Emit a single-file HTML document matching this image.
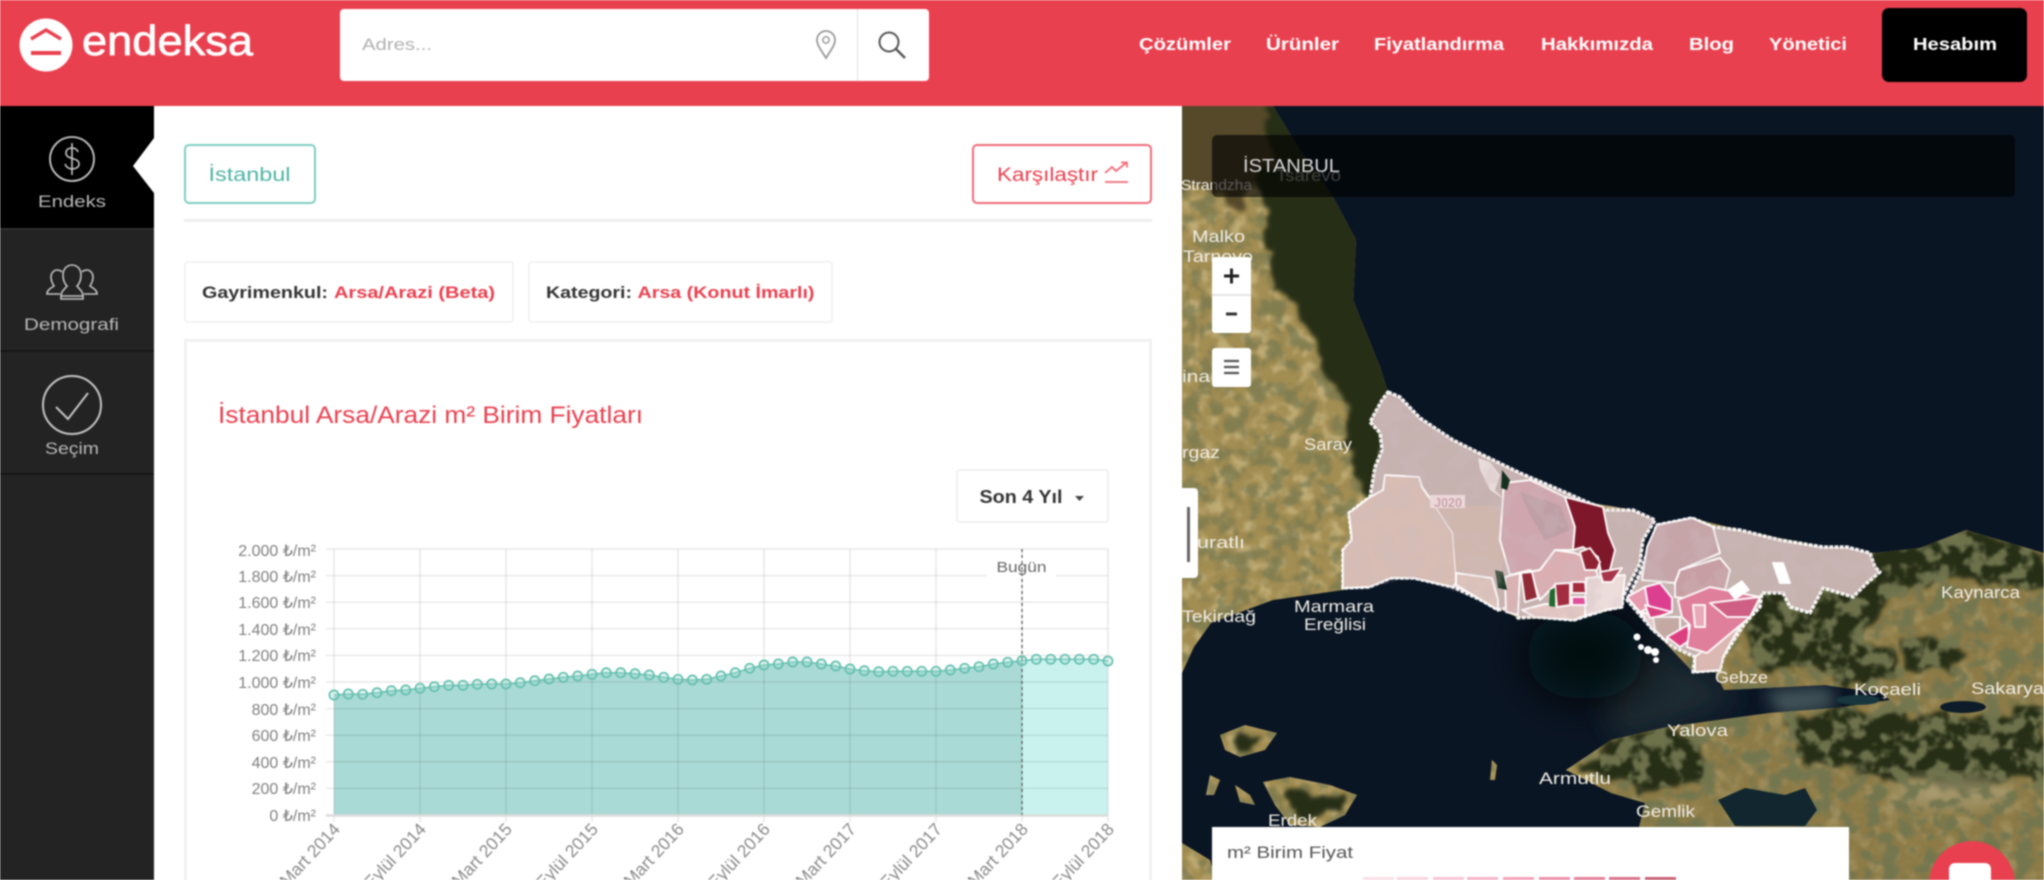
<!DOCTYPE html>
<html lang="tr"><head><meta charset="utf-8"><title>endeksa</title>
<style>
html,body{margin:0;padding:0;background:#fff;overflow:hidden}
body{width:2044px;height:880px;position:relative;font-family:"Liberation Sans",sans-serif}
#w{position:absolute;left:0;top:0;width:2044px;height:880px;overflow:hidden;filter:blur(.9px)}
.a{position:absolute;box-sizing:border-box}
svg{position:absolute;left:0;top:0}
text{font-family:"Liberation Sans","DejaVu Sans",sans-serif}
</style></head><body><div id="w">
<svg width="2044" height="880" viewBox="0 0 2044 880">
<defs>
<filter id="nl" x="0" y="0" width="100%" height="100%"><feTurbulence type="fractalNoise" baseFrequency=".07" numOctaves="4" seed="11"/><feColorMatrix type="matrix" values="0 0 0 0 .72 0 0 0 0 .6 0 0 0 0 .32 0 4 0 0 -1.9"/><feGaussianBlur stdDeviation="1"/></filter>
<filter id="nd" x="0" y="0" width="100%" height="100%"><feTurbulence type="fractalNoise" baseFrequency=".06" numOctaves="4" seed="5"/><feColorMatrix type="matrix" values="0 0 0 0 .17 0 0 0 0 .18 0 0 0 0 .08 7 0 0 0 -3.3"/><feGaussianBlur stdDeviation="1"/></filter>
<filter id="nt" x="0" y="0" width="100%" height="100%"><feTurbulence type="fractalNoise" baseFrequency=".045" numOctaves="3" seed="21"/><feColorMatrix type="matrix" values="0 0 0 0 .62 0 0 0 0 .5 0 0 0 0 .52 5 0 0 0 -2.2"/></filter>
<filter id="fo" x="-20%" y="-20%" width="140%" height="140%"><feTurbulence type="fractalNoise" baseFrequency=".04" numOctaves="3" seed="9" result="t"/><feDisplacementMap in="SourceGraphic" in2="t" scale="30" xChannelSelector="R" yChannelSelector="G"/><feGaussianBlur stdDeviation="2"/></filter>
<filter id="b8"><feGaussianBlur stdDeviation="8"/></filter>
<filter id="b14"><feGaussianBlur stdDeviation="14"/></filter>
<filter id="b24" x="-50%" y="-50%" width="200%" height="200%"><feGaussianBlur stdDeviation="24"/></filter>
<clipPath id="mc"><rect x="1182" y="106" width="862" height="774"/></clipPath>
<clipPath id="ic"><path d="M1388 392 1420 418 1453 440 1520 473 1587 502 1633 510 1655 520 1643 540 1640 563 1622 607 1574 620 1518 618 1481 600 1414 578 1369 587 1343 588 1343 550 1349 513 1370 497 1380 433 1370 422ZM1657 525 1692 518 1740 530 1823 547 1870 553 1880 572 1853 597 1823 588 1810 613 1783 593 1762 593 1745 623 1720 670 1693 672 1653 630 1627 600Z"/></clipPath>
<clipPath id="lc"><path d="M1182 106H1273L1300 150 1333 197 1356 240 1353 300 1380 367 1388 392 1420 418 1453 440 1520 473 1587 502 1633 510 1655 520 1643 540 1640 563 1623 597 1622 607 1574 620 1518 618 1481 600 1453 587 1414 578 1391 578 1343 590 1273 600 1211 623 1194 647 1182 673ZM1657 525 1692 518 1740 530 1823 547 1875 553 1920 548 1966 530 2000 540 2044 553V880H1620L1639 827 1645 803 1611 793 1566 770 1611 740 1667 727 1769 713 1836 708 1890 700 1881 693 1825 685 1724 690 1715 672 1693 672 1653 630 1627 600 1640 573ZM1182 843 1210 860 1215 880H1182ZM1263 782 1290 777 1330 785 1357 795 1345 815 1320 827 1290 825 1275 805ZM1220 735 1245 725 1277 733 1265 750 1240 757 1225 750ZM1210 775 1220 780 1214 795 1206 795ZM1235 785 1250 795 1255 805 1240 802ZM1492 760 1497 765 1495 780 1490 780Z"/></clipPath>
<marker id="dot" markerUnits="userSpaceOnUse" markerWidth="12" markerHeight="12" refX="6" refY="6"><circle cx="6" cy="6" r="4.600" fill="#a6e0d6" fill-opacity=".35" stroke="#63bfae" stroke-width="1.700"/></marker>
</defs>
<!-- MAP -->
<g clip-path="url(#mc)">
<rect x="1182" y="106" width="862" height="774" fill="#0a1524"/>
<path d="M1650 640 1720 680 1740 700 1680 725 1620 745 1600 700Z" fill="#1e2933" filter="url(#b14)"/>
<ellipse cx="1585" cy="655" rx="60" ry="45" fill="#050910" filter="url(#b24)"/>
<path d="M1765 690 1830 687 1835 708 1780 716Z" fill="#44565c" filter="url(#b8)"/>
<g clip-path="url(#lc)">
<rect x="1182" y="106" width="862" height="774" fill="#a28d52"/>
<rect x="1182" y="106" width="862" height="774" fill="#000" filter="url(#nl)" opacity=".5"/>
<rect x="1182" y="106" width="420" height="774" fill="#000" filter="url(#nd)" opacity=".65"/>
<rect x="1600" y="510" width="444" height="370" fill="#6f6136" fill-opacity=".4"/>
<g fill="#262e18" filter="url(#fo)">
<path d="M1240 106H1290L1345 200 1370 250 1365 300 1395 370 1400 420 1385 470 1365 510 1352 470 1345 400 1320 370 1300 310 1268 280 1272 230 1250 170Z"/>
<path d="M1170 90H1262L1272 160 1240 205 1195 190 1170 205Z" fill="#54492b"/>
<path d="M1748 590 1830 590 1900 570 1875 620 1830 670 1765 670 1745 640Z"/>
<path d="M1831 650 1891 645 1895 680 1840 682Z"/>
<path d="M1860 555 1966 530 2044 553 2044 590 1960 580 1880 590Z"/>
<path d="M1567 763 1640 733 1700 735 1704 787 1640 790Z"/>
<path d="M1787 715 1860 710 1960 720 2044 705 2044 775 1950 790 1850 770 1800 760Z"/>
<path d="M1900 640 1960 645 1950 672 1905 670Z"/>
<path d="M1280 800 1340 790 1340 815 1300 820Z"/>
<path d="M1230 735 1265 738 1250 752 1235 750Z"/>
</g>
<ellipse cx="1950" cy="792" rx="60" ry="18" fill="#ad9f78" fill-opacity=".7" filter="url(#b8)"/>
<rect x="1600" y="510" width="444" height="370" fill="#000" filter="url(#nd)" opacity=".95"/>
</g>
<path d="M1718 800 1745 788 1785 795 1805 788 1817 810 1805 826H1735Z" fill="#11262f"/>
<ellipse cx="1963" cy="707" rx="23" ry="6" fill="#0d1c28"/>
<ellipse cx="1858" cy="700" rx="22" ry="5" fill="#17363d"/>
<!-- Istanbul -->
<g stroke="#fff" stroke-width="2" stroke-linejoin="round" stroke-opacity=".9">
<path d="M1388 392 1400 397 1420 418 1453 440 1487 457 1520 473 1553 487 1587 502 1607 510 1633 510 1655 520 1643 540 1640 563 1623 597 1622 607 1605 610 1574 620 1535 617 1518 618 1512 607 1498 610 1481 600 1453 587 1414 578 1391 578 1369 587 1343 588 1343 550 1352 540 1349 513 1370 497 1375 467 1382 450 1380 433 1370 422 1382 400Z" fill="#c6b2af" stroke-width="3.500" stroke-dasharray="4 1.200"/>
<path d="M1349 513 1370 497 1383 490 1385 475 1419 477 1422 487 1436 507 1453 533 1456 573 1456 583 1453 587 1414 578 1391 578 1369 587 1343 588 1343 550 1352 540Z" fill="#d7bdb4"/>
<path d="M1436 507 1500 505 1504 560 1500 577 1456 573 1453 533Z" fill="#d0b7ae" stroke="none"/>
<path d="M1456 573 1492 578 1498 600 1498 610 1481 600 1456 585Z" fill="#dcc3bb"/>
<path d="M1504 483 1530 480 1565 497 1575 527 1573 550 1555 550 1540 570 1510 575 1500 540Z" fill="#cfa6ad"/>
<path d="M1520 492 1560 505 1570 530 1545 540 1530 515Z" fill="#bf9ea6" stroke="none"/>
<path d="M1510 575 1540 570 1555 550 1575 553 1590 560 1598 575 1580 590 1555 585 1540 600 1530 570Z" fill="#dbaeb2"/>
<path d="M1505 577 1520 573 1518 615 1506 612Z" fill="#d9b3b3"/>
<path d="M1586 578 1625 575 1622 607 1605 610 1585 616Z" fill="#ecdcda"/>
<path d="M1522 610 1545 604 1585 604 1585 616 1574 620 1535 617Z" fill="#e4c8c3"/>
<path d="M1495 570 1503 572 1507 590 1498 588Z" fill="#1b3521" stroke="none"/>
<path d="M1502 470 1510 480 1507 490 1501 488Z" fill="#16301e" stroke="none"/>
<path d="M1478 458 1490 462 1500 475 1495 490 1505 500 1490 490 1480 470Z" fill="#e8dcda" stroke="none"/>
<path d="M1657 525 1692 518 1713 527 1740 530 1780 540 1823 547 1847 547 1870 553 1875 567 1880 572 1867 583 1853 597 1823 588 1810 613 1790 607 1783 593 1762 593 1760 607 1745 623 1723 657 1720 670 1693 672 1695 657 1673 647 1653 630 1627 600 1640 573Z" fill="#c6b2ae" stroke-width="3.500" stroke-dasharray="4 1.200"/>
<path d="M1657 525 1692 518 1713 527 1720 553 1680 570 1675 583 1642 580 1647 547Z" fill="#c6a5a9"/>
<path d="M1680 570 1720 558 1730 570 1725 590 1700 600 1675 597 1675 583Z" fill="#c79ea3"/>
<path d="M1640 612 1660 616 1653 630Z" fill="#e8cfcc"/>
<path d="M1653 617 1680 617 1680 633 1665 640 1655 630Z" fill="#c3a9a2"/>
<path d="M1695 657 1745 617 1723 657 1720 670 1695 672Z" fill="#dcb8b2"/>
</g>
<g clip-path="url(#ic)"><rect x="1340" y="390" width="545" height="285" fill="#000" filter="url(#nt)" opacity=".28"/></g>
<g stroke="#fff" stroke-width="2" stroke-linejoin="round" stroke-opacity=".9">
<path d="M1565 497 1603 507 1608 533 1615 550 1608 578 1602 577 1598 557 1583 547 1573 550 1575 527Z" fill="#7e1729"/>
<path d="M1580 552 1590 548 1600 562 1597 570 1585 570Z" fill="#8e2232"/>
<path d="M1521 573 1532 572 1538 598 1525 602Z" fill="#8f2a36"/>
<path d="M1555 584 1570 583 1570 605 1557 607Z" fill="#a32c3e"/>
<path d="M1572 582 1585 582 1586 593 1572 593Z" fill="#a32c3e"/>
<path d="M1572 597 1585 597 1586 605 1572 605Z" fill="#e0509a"/>
<path d="M1600 572 1622 568 1612 582 1603 582Z" fill="#a8344a"/>
<path d="M1550 590 1555 588 1555 607 1549 606Z" fill="#1f6a2d" stroke="none"/>
<path d="M1627 597 1645 587 1650 607 1640 612Z" fill="#e59ab0"/>
<path d="M1645 587 1660 583 1672 598 1672 612 1660 615 1648 605Z" fill="#dc3f8f"/>
<path d="M1645 605 1672 612 1660 616 1650 618Z" fill="#d8407f"/>
<path d="M1667 637 1688 625 1690 640 1680 647Z" fill="#dc3f7f"/>
<path d="M1678 600 1710 587 1760 597 1750 617 1707 653 1687 647 1690 625 1682 617Z" fill="#df7f9b"/>
<path d="M1693 605 1705 605 1705 627 1695 627Z" fill="#e8aab8"/>
<path d="M1710 603 1760 597 1750 617 1727 617Z" fill="#cf5f85"/>
<path d="M1773 563 1783 563 1790 583 1780 583Z" fill="#fff"/>
<path d="M1727 590 1742 580 1750 590 1735 600Z" fill="#fff" stroke="none"/>
<g fill="#fff" stroke="none"><circle cx="1637" cy="637" r="3.500"/><circle cx="1641" cy="647" r="3"/><circle cx="1648" cy="650" r="4"/><circle cx="1655" cy="652" r="4"/><circle cx="1656" cy="660" r="3"/></g>
</g>
<rect x="1430" y="495" width="35" height="13" fill="#ecd8da"/>
<text x="1434" y="507" font-size="13" font-weight="bold" fill="#c9a3ab" textLength="28" lengthAdjust="spacingAndGlyphs">J020</text>
<!-- labels -->
<g fill="#f0ede6" font-size="17">
<text x="1276" y="181" fill="#a8a6a0" textLength="65" lengthAdjust="spacingAndGlyphs">Tsarevo</text>
<text x="1181" y="190" font-size="15" textLength="71" lengthAdjust="spacingAndGlyphs">Strandzha</text>
<text x="1192" y="242" textLength="53" lengthAdjust="spacingAndGlyphs">Malko</text>
<text x="1183" y="262" textLength="70" lengthAdjust="spacingAndGlyphs">Tarnovo</text>
<text x="1182" y="382" textLength="28" lengthAdjust="spacingAndGlyphs">ina</text>
<text x="1182" y="458" textLength="38" lengthAdjust="spacingAndGlyphs">rgaz</text>
<text x="1304" y="450" textLength="48" lengthAdjust="spacingAndGlyphs">Saray</text>
<text x="1197" y="548" textLength="48" lengthAdjust="spacingAndGlyphs">uratlı</text>
<text x="1182" y="622" textLength="74" lengthAdjust="spacingAndGlyphs">Tekirdağ</text>
<text x="1294" y="612" textLength="80" lengthAdjust="spacingAndGlyphs">Marmara</text>
<text x="1304" y="630" textLength="62" lengthAdjust="spacingAndGlyphs">Ereğlisi</text>
<text x="1941" y="598" textLength="79" lengthAdjust="spacingAndGlyphs">Kaynarca</text>
<text x="1715" y="683" textLength="53" lengthAdjust="spacingAndGlyphs">Gebze</text>
<text x="1854" y="695" textLength="67" lengthAdjust="spacingAndGlyphs">Koçaeli</text>
<text x="1971" y="694" textLength="73" lengthAdjust="spacingAndGlyphs">Sakarya</text>
<text x="1667" y="736" textLength="61" lengthAdjust="spacingAndGlyphs">Yalova</text>
<text x="1539" y="784" textLength="72" lengthAdjust="spacingAndGlyphs">Armutlu</text>
<text x="1636" y="817" textLength="59" lengthAdjust="spacingAndGlyphs">Gemlik</text>
<text x="1268" y="826" textLength="49" lengthAdjust="spacingAndGlyphs">Erdek</text>
</g>
<rect x="1212" y="135" width="803" height="62" rx="5" fill="#000" fill-opacity=".62"/>
<text x="1243" y="172" font-size="18" fill="#d9d9d9" textLength="97" lengthAdjust="spacingAndGlyphs">İSTANBUL</text>
<rect x="1212" y="257" width="39" height="76" rx="3" fill="#fff"/>
<rect x="1212" y="294" width="39" height="2" fill="#e4e4e4"/>
<path d="M1224 276h15M1231.500 268.500v15" stroke="#222" stroke-width="3"/>
<path d="M1226 314h11" stroke="#333" stroke-width="3"/>
<rect x="1212" y="348" width="39" height="39" rx="3" fill="#fff"/>
<path d="M1224 361h15M1224 367h15M1224 373h15" stroke="#555" stroke-width="2.200"/>
<rect x="1212" y="827" width="637" height="53" fill="#fff"/>
<text x="1227" y="858" font-size="17" fill="#555" textLength="126" lengthAdjust="spacingAndGlyphs">m² Birim Fiyat</text>
<g><rect x="1363" y="877" width="31" height="3" fill="#fbe0e7"/><rect x="1397" y="877" width="31" height="3" fill="#fbd5df"/><rect x="1433" y="877" width="31" height="3" fill="#f9c6d5"/><rect x="1467" y="877" width="31" height="3" fill="#f7b5c9"/><rect x="1503" y="877" width="31" height="3" fill="#f5a3bd"/><rect x="1539" y="877" width="31" height="3" fill="#ee91ad"/><rect x="1574" y="877" width="31" height="3" fill="#e4829b"/><rect x="1609" y="877" width="31" height="3" fill="#d97389"/><rect x="1645" y="877" width="31" height="3" fill="#c96478"/></g>
<path d="M1929.200 880A43 43 0 0 1 2014.800 880Z" fill="#e9404f"/>
<path d="M1949 880V869a6 6 0 0 1 6-6h30a6 6 0 0 1 6 6V880Z" fill="#fff"/>
</g>
</svg>
<!-- HEADER -->
<div class="a" style="left:0;top:0;width:2044px;height:106px;background:#e9404f"></div>
<div class="a" style="left:340px;top:9px;width:589px;height:72px;background:#fff;border-radius:4px"></div>
<div class="a" style="left:857px;top:9px;width:1px;height:72px;background:#e3e3e3"></div>
<div class="a" style="left:1882px;top:8px;width:145px;height:74px;background:#000;border-radius:7px"></div>
<!-- SIDEBAR -->
<div class="a" style="left:0;top:106px;width:154px;height:774px;background:#232323"></div>
<div class="a" style="left:0;top:106px;width:154px;height:122px;background:#000"></div>
<div class="a" style="left:0;top:228px;width:154px;height:2px;background:#2f2f2f"></div>
<div class="a" style="left:0;top:350px;width:154px;height:2px;background:#161616"></div>
<div class="a" style="left:0;top:473px;width:154px;height:2px;background:#161616"></div>
<!-- PANEL -->
<div class="a" style="left:154px;top:106px;width:1028px;height:774px;background:#fff"></div>
<div class="a" style="left:184px;top:144px;width:132px;height:60px;border:2.500px solid #7fcdc2;border-radius:5px"></div>
<div class="a" style="left:972px;top:144px;width:180px;height:60px;border:2.500px solid #ef6b78;border-radius:5px"></div>
<div class="a" style="left:184px;top:219px;width:968px;height:3px;background:#efefef"></div>
<div class="a" style="left:184px;top:261px;width:330px;height:62px;border:2.500px solid #f2f2f2;border-radius:4px"></div>
<div class="a" style="left:528px;top:261px;width:305px;height:62px;border:2.500px solid #f2f2f2;border-radius:4px"></div>
<div class="a" style="left:184px;top:339px;width:968px;height:541px;border:3px solid #f1f1f1;border-bottom:0"></div>
<div class="a" style="left:956px;top:469px;width:153px;height:54px;border:2px solid #f0f0f0;border-radius:4px"></div>
<div class="a" style="left:1182px;top:488px;width:16px;height:90px;background:#fff;border-radius:0 4px 4px 0"></div>
<div class="a" style="left:1187px;top:507px;width:3px;height:55px;background:#666"></div>
<svg width="2044" height="880" viewBox="0 0 2044 880">
<!-- logo -->
<circle cx="46" cy="45" r="26.500" fill="#fff"/>
<path d="M31 39 46 30 61 39" fill="none" stroke="#e9404f" stroke-width="3.500"/>
<rect x="31" y="51" width="30" height="4" fill="#e9404f"/>
<text x="82" y="55" font-size="42" fill="#fff" stroke="#fff" stroke-width=".7" textLength="171" lengthAdjust="spacingAndGlyphs">endeksa</text>
<!-- search -->
<text x="362" y="50" font-size="17" fill="#b0b0b0" textLength="70" lengthAdjust="spacingAndGlyphs">Adres...</text>
<path d="M826 58c-5-8-9-13-9-18a9 9 0 0 1 18 0c0 5-4 10-9 18z" fill="none" stroke="#9a9a9a" stroke-width="1.800"/>
<circle cx="826" cy="40" r="3.200" fill="none" stroke="#9a9a9a" stroke-width="1.500"/>
<circle cx="889" cy="42" r="9.500" fill="none" stroke="#555" stroke-width="2"/>
<path d="M896 49 905 58" stroke="#555" stroke-width="2.400"/>
<!-- nav -->
<g font-size="17.500" font-weight="bold" fill="#fff">
<text x="1139" y="50" textLength="92" lengthAdjust="spacingAndGlyphs">Çözümler</text>
<text x="1266" y="50" textLength="73" lengthAdjust="spacingAndGlyphs">Ürünler</text>
<text x="1374" y="50" textLength="130" lengthAdjust="spacingAndGlyphs">Fiyatlandırma</text>
<text x="1541" y="50" textLength="112" lengthAdjust="spacingAndGlyphs">Hakkımızda</text>
<text x="1689" y="50" textLength="45" lengthAdjust="spacingAndGlyphs">Blog</text>
<text x="1769" y="50" textLength="78" lengthAdjust="spacingAndGlyphs">Yönetici</text>
<text x="1913" y="50" textLength="84" lengthAdjust="spacingAndGlyphs">Hesabım</text>
</g>
<!-- sidebar -->
<path d="M154 138 133 166 154 193Z" fill="#fff"/>
<g fill="none" stroke="#c4c4c4" stroke-width="1.800">
<circle cx="72" cy="159" r="22"/>
<path d="M78 152c-1-3-3-4-6-4-4 0-6 2-6 5 0 7 13 4 13 11 0 3-3 5-7 5-3 0-6-2-7-5M72 143v32" stroke-width="1.600"/>
<circle cx="72" cy="405" r="29" stroke-width="2"/>
<path d="M56 407 68 419 88 393" stroke-width="2"/>
<path d="M61 296h22v3H61zM61 296c0-5 4-7 6-10-3-3-4-7-4-11 0-6 4-10 9-10s9 4 9 10c0 4-1 8-4 11 2 3 6 5 6 10M60 294H47c0-4 4-6 7-8-2-3-3-6-3-9 0-4 3-7 6-7 2 0 4 1 5 2M84 294h13c0-4-4-6-7-8 2-3 3-6 3-9 0-4-3-7-6-7-2 0-4 1-5 2" stroke-width="1.600"/>
</g>
<g font-size="17" fill="#b9b9b9">
<text x="38" y="207" textLength="68" lengthAdjust="spacingAndGlyphs">Endeks</text>
<text x="24" y="330" textLength="95" lengthAdjust="spacingAndGlyphs">Demografi</text>
<text x="45" y="454" textLength="54" lengthAdjust="spacingAndGlyphs">Seçim</text>
</g>
<!-- panel text -->
<text x="208.500" y="181" font-size="19" fill="#4fb3a5" textLength="82" lengthAdjust="spacingAndGlyphs">İstanbul</text>
<text x="997" y="181" font-size="19" fill="#e9404f" textLength="101" lengthAdjust="spacingAndGlyphs">Karşılaştır</text>
<path d="M1105 182h23M1105 173 1112 167 1116 171 1126 163M1121 162.500h6v5" fill="none" stroke="#ef6b78" stroke-width="1.800"/>
<g font-size="17" font-weight="bold">
<text x="202" y="298" fill="#333" textLength="126" lengthAdjust="spacingAndGlyphs">Gayrimenkul:</text>
<text x="334" y="298" fill="#e9404f" textLength="161" lengthAdjust="spacingAndGlyphs">Arsa/Arazi (Beta)</text>
<text x="546" y="298" fill="#333" textLength="86" lengthAdjust="spacingAndGlyphs">Kategori:</text>
<text x="637.500" y="298" fill="#e9404f" textLength="177" lengthAdjust="spacingAndGlyphs">Arsa (Konut İmarlı)</text>
</g>
<text x="218" y="423" font-size="24" fill="#e9404f" textLength="425" lengthAdjust="spacingAndGlyphs">İstanbul Arsa/Arazi m² Birim Fiyatları</text>
<text x="979.500" y="503" font-size="18" font-weight="bold" fill="#333" textLength="83" lengthAdjust="spacingAndGlyphs">Son 4 Yıl</text>
<path d="M1075 496h9l-4.500 5z" fill="#444"/>
<!-- chart -->
<path d="M334 815V695L348.300 694 362.700 694.300 377 692.700 391.300 690.700 405.700 690 420 688.300 434.300 686.700 448.700 685.300 463 685.300 477.300 684.300 491.700 684 506 684 520.300 682.700 534.700 680.700 549 679 563.300 677.300 577.700 676 592 674.300 606.300 672.700 620.700 672.700 635 673.700 649.300 675 663.700 677.300 678 679.300 692.300 680 706.700 679.300 721 676 735.300 672.700 749.700 668.300 764 665 778.300 664 792.700 662 807 662 821.300 664 835.700 666 850 669 864.300 670.700 878.700 671.700 893 671.300 907.300 671.300 921.700 671.300 936 671.300 950.300 670 964.700 668.300 979 666.700 993.300 664 1007.700 662.300 1022 660.700V815Z" fill="#aadad5"/>
<path d="M1022 815V660.700L1036.300 659.300 1050.700 659.300 1065 659.300 1079.300 659.300 1093.700 659.300 1108 661V815Z" fill="#c9f2ee"/>
<g stroke="#000" stroke-opacity=".085" stroke-width="1.500" fill="none">
<path d="M326 549H1108M326 575.600H1108M326 602.200H1108M326 628.800H1108M326 655.400H1108M326 682H1108M326 708.600H1108M326 735.200H1108M326 761.800H1108M326 788.400H1108"/>
<path d="M334 549V822M420 549V822M506 549V822M592 549V822M678 549V822M764 549V822M850 549V822M936 549V822M1022 549V822M1108 549V822"/>
</g>
<path d="M326 815.500H1108" stroke="#dcdcdc" stroke-width="2.500"/>
<rect x="987" y="555" width="69" height="23" fill="#fff"/>
<path d="M1022 549V815" stroke="#555" stroke-width="1.200" stroke-dasharray="3 3"/>
<polyline fill="none" stroke="#63bfae" stroke-width="1.500" marker-start="url(#dot)" marker-mid="url(#dot)" marker-end="url(#dot)" points="334,695 348.300,694 362.700,694.300 377,692.700 391.300,690.700 405.700,690 420,688.300 434.300,686.700 448.700,685.300 463,685.300 477.300,684.300 491.700,684 506,684 520.300,682.700 534.700,680.700 549,679 563.300,677.300 577.700,676 592,674.300 606.300,672.700 620.700,672.700 635,673.700 649.300,675 663.700,677.300 678,679.300 692.300,680 706.700,679.300 721,676 735.300,672.700 749.700,668.300 764,665 778.300,664 792.700,662 807,662 821.300,664 835.700,666 850,669 864.300,670.700 878.700,671.700 893,671.300 907.300,671.300 921.700,671.300 936,671.300 950.300,670 964.700,668.300 979,666.700 993.300,664 1007.700,662.300 1022,660.700 1036.300,659.300 1050.700,659.300 1065,659.300 1079.300,659.300 1093.700,659.300 1108,661"/>
<text x="1021.500" y="572" font-size="15" fill="#666" text-anchor="middle" textLength="50" lengthAdjust="spacingAndGlyphs">Bugün</text>
<g font-size="16" fill="#808080" text-anchor="end">
<text x="316" y="556">2.000 ₺/m²</text><text x="316" y="582">1.800 ₺/m²</text><text x="316" y="608">1.600 ₺/m²</text><text x="316" y="635">1.400 ₺/m²</text><text x="316" y="661">1.200 ₺/m²</text><text x="316" y="688">1.000 ₺/m²</text><text x="316" y="715">800 ₺/m²</text><text x="316" y="741">600 ₺/m²</text><text x="316" y="768">400 ₺/m²</text><text x="316" y="794">200 ₺/m²</text><text x="316" y="821">0 ₺/m²</text>
</g>
<g font-size="17.500" fill="#8a8a8a" text-anchor="end">
<text transform="translate(341 830) rotate(-47)">Mart 2014</text>
<text transform="translate(427 830) rotate(-47)">Eylül 2014</text>
<text transform="translate(513 830) rotate(-47)">Mart 2015</text>
<text transform="translate(599 830) rotate(-47)">Eylül 2015</text>
<text transform="translate(685 830) rotate(-47)">Mart 2016</text>
<text transform="translate(771 830) rotate(-47)">Eylül 2016</text>
<text transform="translate(857 830) rotate(-47)">Mart 2017</text>
<text transform="translate(943 830) rotate(-47)">Eylül 2017</text>
<text transform="translate(1029 830) rotate(-47)">Mart 2018</text>
<text transform="translate(1115 830) rotate(-47)">Eylül 2018</text>
</g>
</svg>
</div></body></html>
